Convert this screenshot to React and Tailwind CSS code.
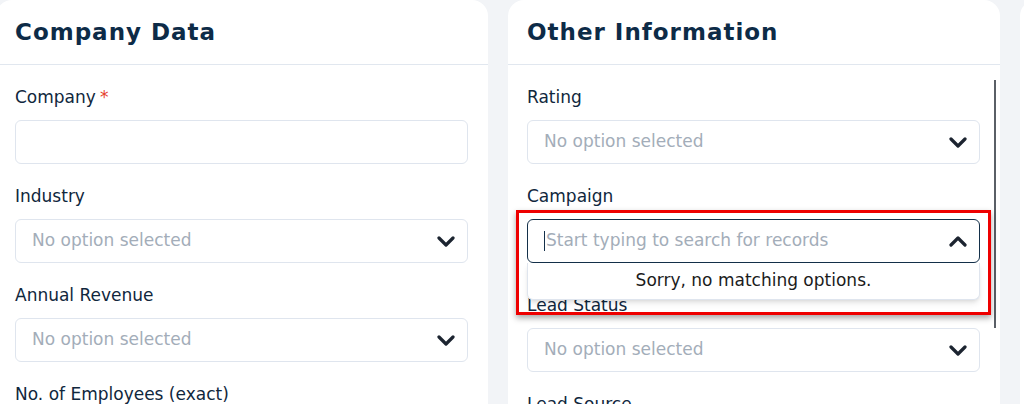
const Chevron = ({ up = false }) => (
  <svg width="18" height="11" viewBox="0 0 18 11" className="shrink-0">
    <path
      d={up ? "M2 9l7-7 7 7" : "M2 2l7 7 7-7"}
      fill="none"
      stroke="#1c2430"
      strokeWidth="3.2"
      strokeLinecap="round"
      strokeLinejoin="round"
    />
  </svg>
);

const Label = ({ children, required }) => (
  <div className="h-6 leading-6 text-[17px] text-[#10273d] mb-[11px]">
    {children}
    {required && <span className="text-[#e5412d] ml-1">*</span>}
  </div>
);

const Select = () => (
  <div className="h-11 rounded-md border border-[#dfe5ee] bg-white flex items-center justify-between pl-4 pr-3">
    <span className="text-[17px] text-[#a3adb9]">No option selected</span>
    <Chevron />
  </div>
);

const Field = ({ label, required, className = "mb-5", children }) => (
  <div className={className}>
    <Label required={required}>{label}</Label>
    {children}
  </div>
);

const Card = ({ title, children, className = "" }) => (
  <div className={`w-[492px] shrink-0 bg-white rounded-t-2xl relative ${className}`}>
    <div className="h-[65px] border-b border-[#e1e7ef] px-[19px] flex items-center">
      <h2 className="text-[23px] font-bold text-[#0d2b47] tracking-[1px]">{title}</h2>
    </div>
    <div className="pt-5 pl-[19px] pr-[20px]">{children}</div>
  </div>
);

export default function App() {
  return (
    <div
      className="w-[1024px] h-[404px] overflow-hidden bg-[#f2f4f7] flex gap-5"
      style={{ fontFamily: '"DejaVu Sans", sans-serif' }}
    >
      <Card title="Company Data" className="-ml-1">
        <Field label="Company" required>
          <div className="h-11 rounded-md border border-[#dfe5ee] bg-white" />
        </Field>
        <Field label="Industry">
          <Select />
        </Field>
        <Field label="Annual Revenue">
          <Select />
        </Field>
        <Field label="No. of Employees (exact)">
          <div className="h-11 rounded-md border border-[#dfe5ee] bg-white" />
        </Field>
      </Card>

      <Card title="Other Information">
        <div className="absolute left-[486px] top-[80px] w-[2px] h-[248px] bg-[#5a5f66]" />
        <Field label="Rating">
          <Select />
        </Field>
        <Field label="Campaign" className="mb-[30px]">
          <div className="relative">
            <div className="h-11 rounded-md border border-[#14304a] bg-white flex items-center justify-between pl-4 pr-3">
              <span className="flex items-center text-[17px] text-[#a3adb9]">
                <span className="w-px h-5 bg-[#14304a] mr-px" />
                Start typing to search for records
              </span>
              <Chevron up />
            </div>
            <div className="absolute left-0 right-0 top-full z-10 h-[37px] bg-white border border-t-0 border-[#dfe5ee] rounded-b-md shadow-md flex items-center justify-center text-[17px] text-[#1b1b1b]">
              Sorry, no matching options.
            </div>
            <div className="absolute -left-[11px] -right-[11px] -top-[9px] h-[105px] border-[3px] border-[#ee0000] z-20 shadow-[0_3px_6px_rgba(0,0,0,0.35)]" />
          </div>
        </Field>
        <Field label="Lead Status">
          <Select />
        </Field>
        <Field label="Lead Source">
          <Select />
        </Field>
      </Card>

      <div className="w-[60px] shrink-0 bg-white rounded-tl-2xl" />
    </div>
  );
}
